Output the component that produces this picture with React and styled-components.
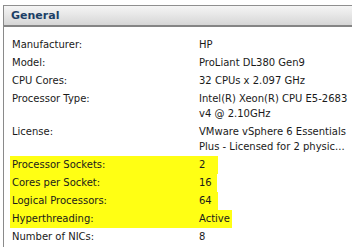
import React from "react";
import styled, { createGlobalStyle } from "styled-components";

const GlobalStyle = createGlobalStyle`
  html, body {
    margin: 0;
    padding: 0;
    background: #ffffff;
    overflow: hidden;
  }
  body {
    font-family: "DejaVu Sans", Verdana, sans-serif;
  }
`;

export const Panel = styled.div`
  margin: 5px 0 0 3px;
  width: calc(100vw - 4px);
  height: calc(100vh - 6px);
  box-sizing: border-box;
  overflow: hidden;
  border-left: 1px solid #8a8a8a;
  border-top: 1px solid #8f8f8f;
  background: #ffffff;
`;

export const Header = styled.div`
  height: 19px;
  display: flex;
  align-items: center;
  padding-left: 7px;
  background: linear-gradient(to bottom, #f5f5f5 0%, #e4e4e4 55%, #d6d6d6 100%);
  border-bottom: 2px solid #858585;
  color: #1c3f66;
  font-weight: bold;
  font-size: 11px;
`;

export const Body = styled.div`
  padding: 9px 0 0 8px;
  display: flex;
  flex-direction: column;
`;

export const Row = styled.div`
  display: grid;
  grid-template-columns: 187px auto;
  width: fit-content;
  padding: 2px ${(p) => (p.$marked ? p.$tail : 0)}px 2px 2px;
  margin-left: -2px;
  background: ${(p) => (p.$marked ? "#ffff14" : "transparent")};
  font-size: 10px;
  line-height: 14px;
  color: #1a1a1a;
  white-space: nowrap;
`;

export const Line = styled.div`
  & + & {
    margin-top: 1px;
  }
`;

const rows = [
  { label: "Manufacturer:", value: ["HP"] },
  { label: "Model:", value: ["ProLiant DL380 Gen9"] },
  { label: "CPU Cores:", value: ["32 CPUs x 2.097 GHz"] },
  { label: "Processor Type:", value: ["Intel(R) Xeon(R) CPU E5-2683", "v4 @ 2.10GHz"] },
  { label: "License:", value: ["VMware vSphere 6 Essentials", "Plus - Licensed for 2 physic..."] },
  { label: "Processor Sockets:", value: ["2"], marked: true, tail: 13 },
  { label: "Cores per Socket:", value: ["16"], marked: true, tail: 5 },
  { label: "Logical Processors:", value: ["64"], marked: true, tail: 6 },
  { label: "Hyperthreading:", value: ["Active"], marked: true, tail: 2 },
  { label: "Number of NICs:", value: ["8"] },
];

export default function App() {
  return (
    <>
      <GlobalStyle />
      <Panel>
        <Header>General</Header>
        <Body>
          {rows.map((r) => (
            <Row key={r.label} $marked={r.marked} $tail={r.tail}>
              <span>{r.label}</span>
              <span>
                {r.value.map((line, i) => (
                  <Line key={i}>{line}</Line>
                ))}
              </span>
            </Row>
          ))}
        </Body>
      </Panel>
    </>
  );
}
